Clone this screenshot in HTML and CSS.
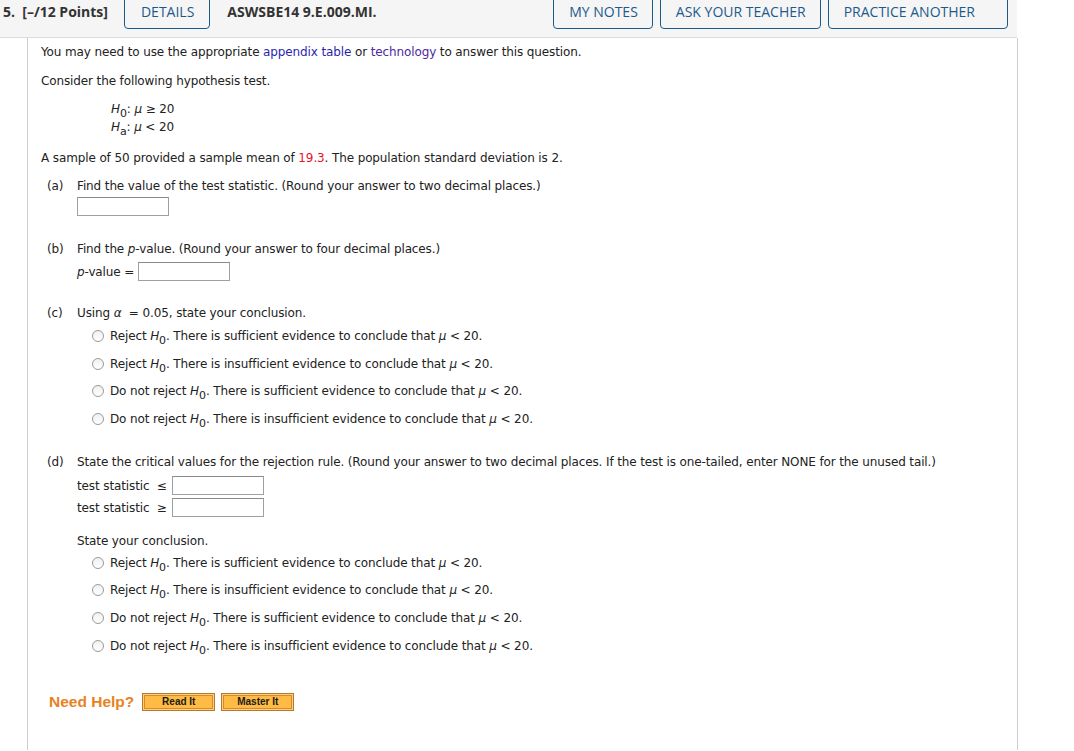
FILE: index.html
```html
<!DOCTYPE html>
<html>
<head>
<meta charset="utf-8">
<link rel="stylesheet" href="styles.css">
</head>
<body>
<div class="header">
  <span class="qnum">5.&nbsp; [–/12 Points]</span>
  <span class="hbtn hbtn-details">DETAILS</span>
  <span class="qid">ASWSBE14 9.E.009.MI.</span>
  <span class="spacer"></span>
  <span class="hbtn">MY NOTES</span>
  <span class="hbtn">ASK YOUR TEACHER</span>
  <span class="hbtn hbtn-wide">PRACTICE ANOTHER</span>
</div>
<div class="content">
  <p class="line l-intro">You may need to use the appropriate <span class="link1">appendix table</span> or <span class="link2">technology</span> to answer this question.</p>
  <p class="line l-consider">Consider the following hypothesis test.</p>
  <div class="hyp">
    <div class="line"><i>H</i><sub>0</sub>: <i>μ</i> ≥ 20</div>
    <div class="line"><i>H</i><sub>a</sub>: <i>μ</i> &lt; 20</div>
  </div>
  <p class="line l-sample">A sample of 50 provided a sample mean of <span class="red">19.3</span>. The population standard deviation is 2.</p>

  <div class="part part-a">
    <div class="line"><span class="plabel">(a)</span>Find the value of the test statistic. (Round your answer to two decimal places.)</div>
    <div class="indent"><span class="box box-a"></span></div>
  </div>

  <div class="part part-b">
    <div class="line"><span class="plabel">(b)</span>Find the <i>p</i>-value. (Round your answer to four decimal places.)</div>
    <div class="indent row-input"><span class="lbl"><i>p</i>-value =</span><span class="box box-p"></span></div>
  </div>

  <div class="part part-c">
    <div class="line"><span class="plabel">(c)</span>Using <i>α</i>&nbsp; = 0.05, state your conclusion.</div>
    <div class="radios">
      <div class="radio"><span class="circle"></span><span>Reject <i>H</i><sub>0</sub>. There is sufficient evidence to conclude that <i>μ</i> &lt; 20.</span></div>
      <div class="radio"><span class="circle"></span><span>Reject <i>H</i><sub>0</sub>. There is insufficient evidence to conclude that <i>μ</i> &lt; 20.</span></div>
      <div class="radio"><span class="circle"></span><span>Do not reject <i>H</i><sub>0</sub>. There is sufficient evidence to conclude that <i>μ</i> &lt; 20.</span></div>
      <div class="radio"><span class="circle"></span><span>Do not reject <i>H</i><sub>0</sub>. There is insufficient evidence to conclude that <i>μ</i> &lt; 20.</span></div>
    </div>
  </div>

  <div class="part part-d">
    <div class="line"><span class="plabel">(d)</span>State the critical values for the rejection rule. (Round your answer to two decimal places. If the test is one-tailed, enter NONE for the unused tail.)</div>
    <div class="crit">
      <div class="indent row-crit"><span class="lbl">test statistic&nbsp; ≤</span><span class="box box-c"></span></div>
      <div class="indent row-crit"><span class="lbl">test statistic&nbsp; ≥</span><span class="box box-c"></span></div>
    </div>
    <div class="indent line l-state">State your conclusion.</div>
    <div class="radios radios-d">
      <div class="radio"><span class="circle"></span><span>Reject <i>H</i><sub>0</sub>. There is sufficient evidence to conclude that <i>μ</i> &lt; 20.</span></div>
      <div class="radio"><span class="circle"></span><span>Reject <i>H</i><sub>0</sub>. There is insufficient evidence to conclude that <i>μ</i> &lt; 20.</span></div>
      <div class="radio"><span class="circle"></span><span>Do not reject <i>H</i><sub>0</sub>. There is sufficient evidence to conclude that <i>μ</i> &lt; 20.</span></div>
      <div class="radio"><span class="circle"></span><span>Do not reject <i>H</i><sub>0</sub>. There is insufficient evidence to conclude that <i>μ</i> &lt; 20.</span></div>
    </div>
  </div>

  <div class="help">
    <span class="need">Need Help?</span>
    <span class="hb">Read It</span>
    <span class="hb">Master It</span>
  </div>
</div>
</body>
</html>
```

FILE: styles.css
```css
html, body {
  margin: 0;
  padding: 0;
  background: #ffffff;
}
body {
  width: 1074px;
  height: 751px;
  overflow: hidden;
  font-family: "DejaVu Sans", Verdana, sans-serif;
  font-size: 12px;
  letter-spacing: -0.12px;
  color: #222222;
}
.header {
  width: 1017px;
  height: 37px;
  background: #f5f5f5;
  border-bottom: 1px solid #dcdcdc;
  display: flex;
  align-items: flex-start;
  font-family: "Open Sans", "Noto Sans", sans-serif;
  font-size: 14px;
  letter-spacing: 0;
  box-sizing: content-box;
  overflow: hidden;
}
.qnum {
  font-weight: 700;
  color: #333333;
  margin-left: 3px;
  margin-top: 3px;
  line-height: 18px;
}
.qid {
  font-weight: 700;
  color: #333333;
  margin-left: 17px;
  margin-top: 3px;
  line-height: 18px;
}
.spacer { flex: 1; }
.hbtn {
  display: block;
  height: 35px;
  margin-top: -6px;
  box-sizing: border-box;
  padding: 8px 14px 0 15px;
  line-height: 18px;
  color: #1c5a8c;
  border: 1px solid #1c5a8c;
  border-radius: 4px;
  margin-left: 7px;
  background: #f5f5f5;
}
.hbtn-details { margin-left: 16px; padding: 8px 15px 0 16px; }
.hbtn-wide { padding-right: 32px; margin-right: 9px; }

.content {
  margin-left: 27px;
  width: 991px;
  height: 712px;
  border-left: 1px solid #cfcfcf;
  border-right: 1px solid #cfcfcf;
  padding: 5px 0 0 13px;
  box-sizing: border-box;
}
p { margin: 0; }
.line { line-height: 18px; }
.l-consider { margin-top: 11px; }
.hyp { margin: 10px 0 0 70px; }
.l-sample { margin-top: 13px; }
.link1 { color: #2d1fb0; }
.link2 { color: #4b2a9e; }
.red { color: #e8102a; }
i { font-style: italic; }
sub {
  font-size: 11px;
  vertical-align: -4px;
  line-height: 0;
}
.part { margin-left: 6px; }
.part-a { margin-top: 10px; }
.part-b { margin-top: 24px; }
.part-c { margin-top: 23px; }
.part-d { margin-top: 20px; }
.plabel {
  display: inline-block;
  width: 30px;
}
.indent { margin-left: 30px; }
.lbl { white-space: pre; }
.box {
  display: inline-block;
  width: 90px;
  height: 17px;
  border: 1px solid #a0a0a0;
  border-top-color: #8a8a8a;
  background: #fff;
  box-sizing: content-box;
}
.box-a { margin-top: 2px; display: block; }
.box-p { margin-left: 4px; }
.box-c { margin-left: 5px; }
.row-input {
  margin-top: 4px;
  height: 19px;
  display: flex;
  align-items: center;
}
.radios { margin-left: 45px; }
.radios-d { margin-top: -1px; }
.radio {
  height: 27.7px;
  display: flex;
  align-items: center;
  white-space: pre;
}
.circle {
  display: inline-block;
  flex: none;
  width: 10px;
  height: 10px;
  border: 1px solid #9a9a9a;
  border-radius: 50%;
  background: linear-gradient(#f0f0f0, #ffffff);
  margin-right: 6px;
}
.crit {
  margin-top: 5px;
  display: flex;
  flex-direction: column;
  gap: 2px;
}
.row-crit {
  height: 20px;
  display: flex;
  align-items: center;
}
.l-state { margin-top: 14px; }
.help {
  margin: 32px 0 0 8px;
  display: flex;
  align-items: center;
  height: 20px;
  font-family: "Liberation Sans", Arial, sans-serif;
  letter-spacing: 0;
}
.need {
  color: #e8821e;
  font-weight: 700;
  font-size: 15.5px;
  margin-right: 8px;
}
.hb {
  display: inline-flex;
  align-items: center;
  justify-content: center;
  box-sizing: border-box;
  width: 73px;
  height: 18px;
  border: 1px solid #b8752c;
  box-shadow: inset 0 0 0 1px #ffd27a, inset 0 0 0 2px #d38a30;
  background: #ffbb44;
  font-size: 10px;
  font-weight: 700;
  color: #1a1a1a;
  margin-right: 6px;
}
```
